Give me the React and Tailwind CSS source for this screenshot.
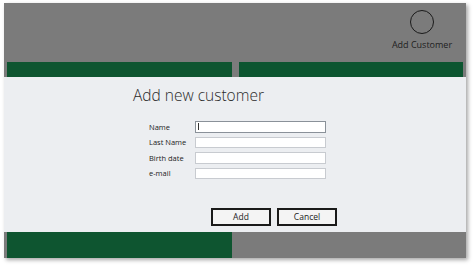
export default function App() {
  const fields = ['Name', 'Last Name', 'Birth date', 'e-mail'];

  return (
    <div className="w-[474px] h-[267px] bg-white pl-[4px] pt-[3px]" style={{ fontFamily: '"Open Sans", "Noto Sans", sans-serif' }}>
      <div className="w-[462px] h-[255px] flex flex-col bg-[#7b7b7b] shadow-[2px_2px_4px_rgba(0,0,0,0.35)]">
        {/* top app bar */}
        <div className="h-[59px] flex justify-end pr-[13px]">
          <div className="flex flex-col items-center pt-[7px] w-[62px]">
            <div className="w-[24px] h-[24px] rounded-full border-[1.5px] border-[#1a1a1a]" />
            <span className="mt-[5px] text-[9px] leading-[11px] text-[#1e1e1e] whitespace-nowrap">Add Customer</span>
          </div>
        </div>

        {/* tiles row */}
        <div className="h-[15px] flex gap-[7px] px-[3px]">
          <div className="w-[225px] h-full bg-[#0e5530]" />
          <div className="flex-1 h-full bg-[#0c5530]" />
        </div>

        {/* dialog */}
        <div className="h-[155px] bg-[#eceef1] flex flex-col">
          <h1 className="ml-[129px] mt-[8px] text-[15.5px] leading-[21px] font-light text-[#2a2a2a]">Add new customer</h1>
          <div className="ml-[145px] mt-[15px] flex flex-col gap-[4px]">
            {fields.map((f, i) => (
              <div key={f} className="flex items-center h-[11.5px]">
                <span className="w-[46px] text-[7.5px] leading-[10px] text-[#222]">{f}</span>
                <div className={`w-[131px] h-[11.5px] bg-white border ${i === 0 ? 'border-[#8a9199]' : 'border-[#c8cbd0]'} relative`}>
                  {i === 0 && <div className="absolute left-[2px] top-[1px] w-[1px] h-[7px] bg-[#333]" />}
                </div>
              </div>
            ))}
          </div>
          <div className="ml-[207px] mt-[29px] flex gap-[6px]">
            <button className="w-[60px] h-[18px] border-2 border-[#1a1a1a] bg-[#f4f4f4] text-[8.5px] leading-[12px] text-[#222]">Add</button>
            <button className="w-[60px] h-[18px] border-2 border-[#1a1a1a] bg-[#f4f4f4] text-[8.5px] leading-[12px] text-[#222]">Cancel</button>
          </div>
        </div>

        {/* bottom tiles */}
        <div className="flex-1 flex pl-[3px]">
          <div className="w-[225px] h-full bg-[#0e5530]" />
        </div>
      </div>
    </div>
  );
}
